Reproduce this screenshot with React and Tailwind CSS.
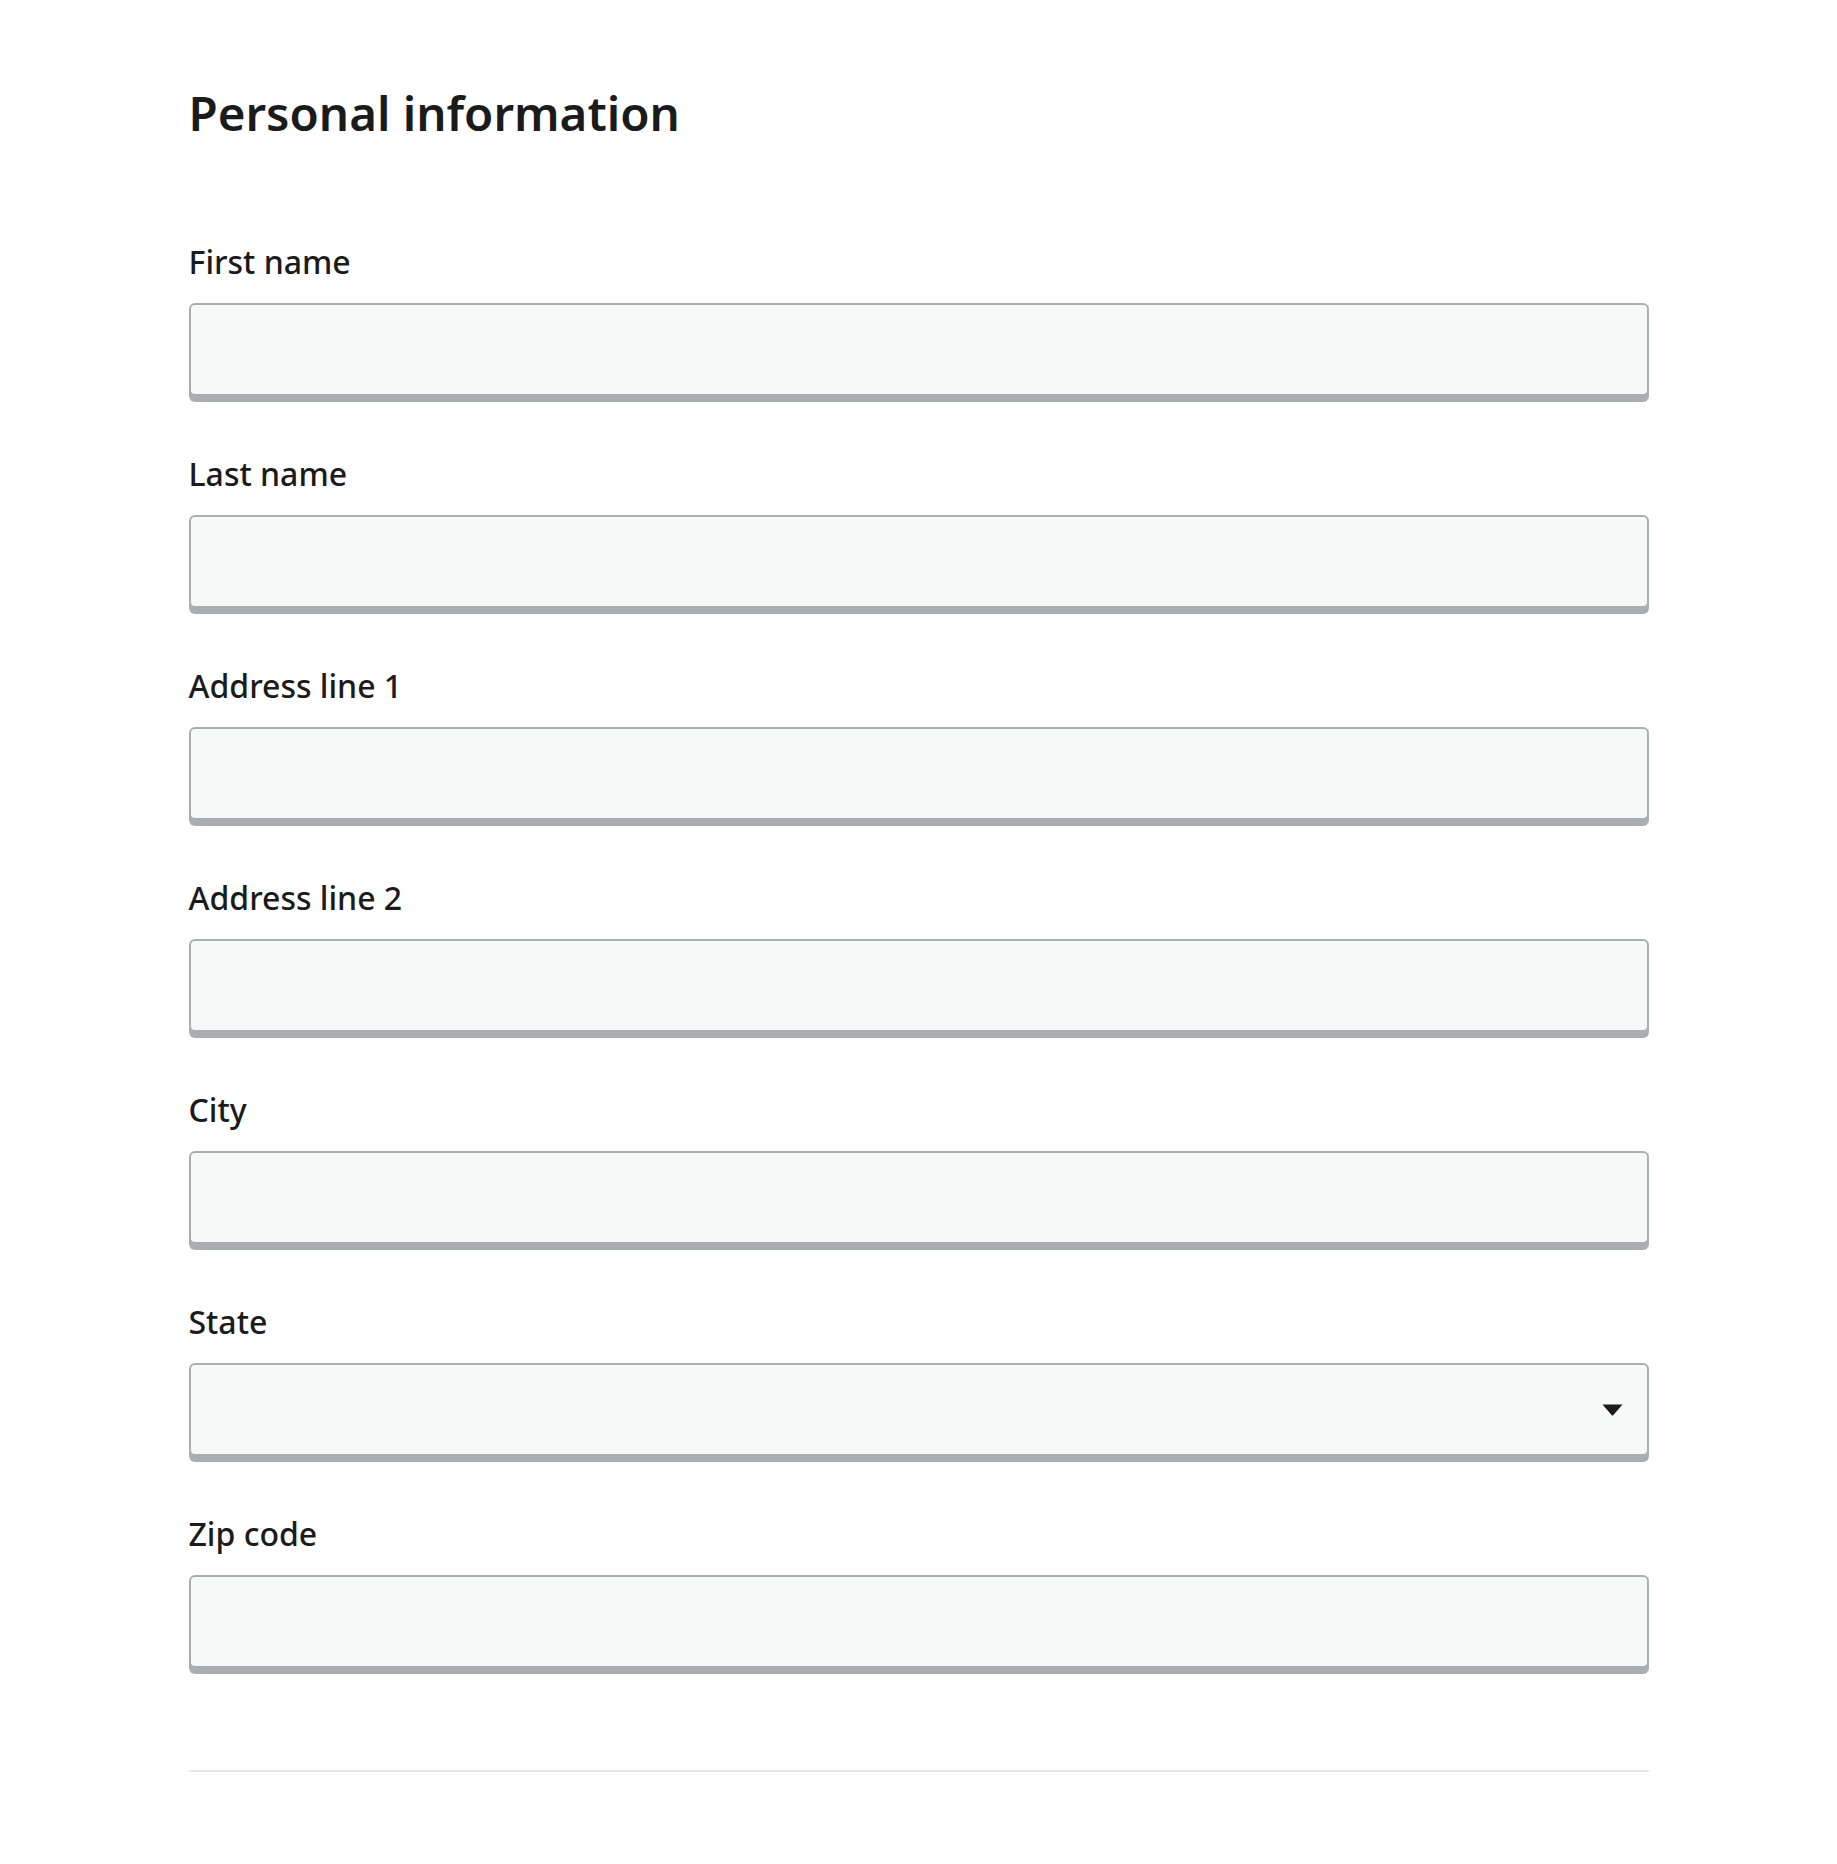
import React from "react";

const fields = [
  { label: "First name" },
  { label: "Last name" },
  { label: "Address line 1" },
  { label: "Address line 2" },
  { label: "City" },
  { label: "State", select: true },
  { label: "Zip code" },
];

function Field({ label, select }) {
  return (
    <div className="flex flex-col">
      <label className="text-[32px] leading-[40px] font-medium text-[#1b1b1b]">{label}</label>
      <div className="mt-[21px] mb-[58px] relative h-[93px] w-full rounded-[6px] border-2 border-[#a9aeb1] bg-[#f7f9f9] shadow-[0_6px_0_#a9aeb1]">
        {select && (
          <svg
            className="absolute right-[24px] top-1/2 -translate-y-1/2"
            width="21"
            height="12"
            viewBox="0 0 21 12"
          >
            <path d="M0.5 0.5 H20.5 L11.2 11.2 Q10.5 12 9.8 11.2 Z" fill="#1b1b1b" />
          </svg>
        )}
      </div>
    </div>
  );
}

export default function App() {
  return (
    <div
      className="min-h-[1864px] w-full bg-white"
      style={{ fontFamily: '"Noto Sans", "Open Sans", sans-serif' }}
    >
      <div className="mx-auto w-[1460px] pt-[83px]">
        <h1 className="text-[47.5px] leading-[60px] font-semibold text-[#1b1b1b]">Personal information</h1>
        <div className="mt-[99px] flex flex-col">
          {fields.map((f) => (
            <Field key={f.label} {...f} />
          ))}
        </div>
        <div className="mt-[44px] h-[2px] w-full bg-[#e6e8e9]" />
      </div>
    </div>
  );
}
